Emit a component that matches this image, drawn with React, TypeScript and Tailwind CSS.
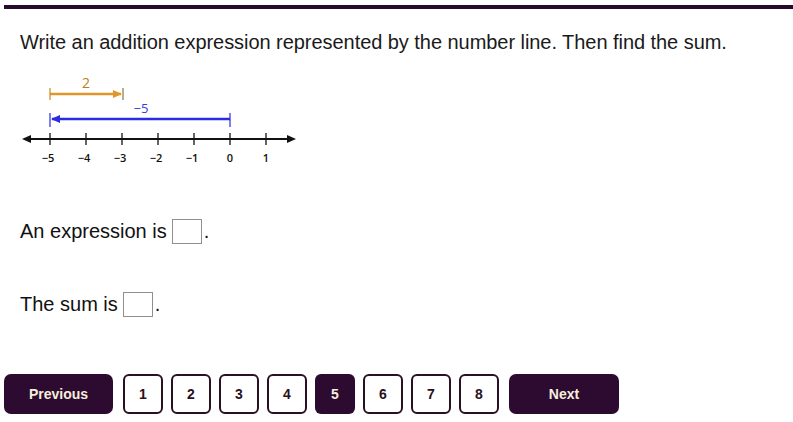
import React from 'react';

const NumberLine = () => {
  const ticks = [-5, -4, -3, -2, -1, 0, 1];
  const x0 = 30; // svg x of -5 (page x 50)
  const step = 36;
  return (
    <svg width="290" height="100" viewBox="0 0 290 100" className="block">
      {/* orange arrow: +2 from -5 to -3 */}
      <text x="66" y="23" fontSize="14" fill="#b8801a" textAnchor="middle" fontFamily="'Open Sans', sans-serif">2</text>
      <line x1={x0} y1="29" x2={x0 + 2 * step - 1} y2="29" stroke="#e0962a" strokeWidth="2.5" />
      <line x1={x0} y1="23" x2={x0} y2="35" stroke="#c98a20" strokeWidth="1.2" />
      <line x1={x0 + 2 * step + 1} y1="23" x2={x0 + 2 * step + 1} y2="35" stroke="#8a7a40" strokeWidth="1.2" />
      <polygon points={`${x0 + 2 * step},29 ${x0 + 2 * step - 9},25 ${x0 + 2 * step - 9},33`} fill="#e0962a" />

      {/* blue arrow: -5 from 0 to -5 */}
      <text x="121" y="48" fontSize="13" fill="#3a3ae8" textAnchor="middle" fontFamily="'Open Sans', sans-serif">−5</text>
      <line x1={x0 + 2} y1="54" x2={x0 + 5 * step} y2="54" stroke="#2b2be0" strokeWidth="2.5" />
      <line x1={x0} y1="48" x2={x0} y2="62" stroke="#2b2be0" strokeWidth="1.2" />
      <line x1={x0 + 5 * step} y1="48" x2={x0 + 5 * step} y2="62" stroke="#2b2be0" strokeWidth="1.2" />
      <polygon points={`${x0 + 1},54 ${x0 + 10},50 ${x0 + 10},58`} fill="#2b2be0" />

      {/* axis */}
      <line x1="6" y1="74" x2="272" y2="74" stroke="#111" strokeWidth="2" />
      <polygon points="2,74 11,70 11,78" fill="#111" />
      <polygon points="276,74 267,70 267,78" fill="#111" />
      {ticks.map((t, i) => (
        <g key={t}>
          <line x1={x0 + i * step} y1="68" x2={x0 + i * step} y2="80" stroke="#111" strokeWidth="1.3" />
          <text
            x={x0 + i * step + (t < 0 ? -2 : 0)}
            y="97"
            fontSize="11"
            fontWeight="600"
            fill="#111"
            textAnchor="middle"
            fontFamily="'Open Sans', sans-serif"
          >
            {t < 0 ? `−${-t}` : t}
          </text>
        </g>
      ))}
    </svg>
  );
};

const AnswerBox = () => (
  <span className="inline-block w-[30px] h-[25px] border border-[#8f8f8f] align-middle mx-[5px] bg-white" />
);

export default function App() {
  const pages = [1, 2, 3, 4, 5, 6, 7, 8];
  return (
    <div className="w-[793px] h-[422px] bg-white overflow-hidden font-['Liberation_Sans',Arial,sans-serif] text-[#111]">
      <div className="ml-[4px] mt-[5px] h-[4px] bg-[#2a0a2c]" />

      <div className="pl-[20px]">
        <p className="mt-[21px] text-[20px] leading-[24px] text-[#1a1a1a] tracking-[-0.05px]">
          Write an addition expression represented by the number line. Then find the sum.
        </p>

        <div className="mt-[11px]">
          <NumberLine />
        </div>

        <p className="mt-[53px] text-[20px] leading-[26px] flex items-center">
          An expression is
          <AnswerBox />
          <span className="-ml-[3px]">.</span>
        </p>

        <p className="mt-[47px] text-[20px] leading-[26px] flex items-center">
          The sum is
          <AnswerBox />
          <span className="-ml-[3px]">.</span>
        </p>
      </div>

      <div className="mt-[57px] ml-[4px] flex items-center font-['Liberation_Sans',Arial,sans-serif] font-bold text-[14px]">
        <button className="w-[109px] h-[40px] rounded-[7px] bg-[#2d0a30] text-[#f7efdc]">Previous</button>
        <div className="ml-[10px] flex gap-[8px]">
          {pages.map((p) => (
            <button
              key={p}
              className={
                p === 5
                  ? 'w-[40px] h-[40px] rounded-[6px] bg-[#2d0a30] text-[#f7efdc]'
                  : 'w-[40px] h-[40px] rounded-[6px] border-2 border-[#2a1020] bg-white text-[#2a1020]'
              }
            >
              {p}
            </button>
          ))}
        </div>
        <button className="ml-[10px] w-[110px] h-[40px] rounded-[7px] bg-[#2d0a30] text-[#f7efdc]">Next</button>
      </div>
    </div>
  );
}
